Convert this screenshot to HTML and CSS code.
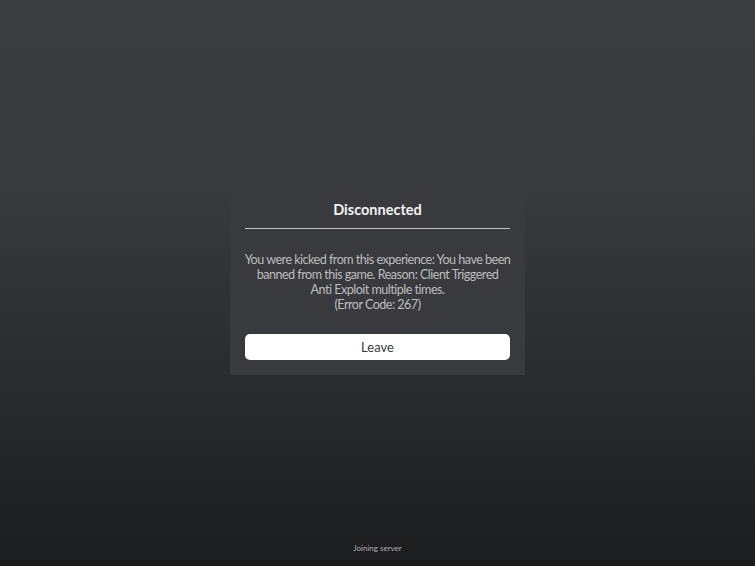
FILE: index.html
```html
<!DOCTYPE html>
<html>
<head>
    <meta http-equiv="Content-Type" content="text/html; charset=utf-8">
    <title>Disconnected</title>
    <link rel="stylesheet" href="styles.css">
</head>
<body>
    <div class="screen">
        <div class="dialog">
            <h1 class="title">Disconnected</h1>
            <div class="divider"></div>
            <p class="message">You were kicked from this experience: You have been<br>banned from this game. Reason: Client Triggered<br>Anti Exploit multiple times.<br>(Error Code: 267)</p>
            <button class="leave">Leave</button>
        </div>
        <div class="status">Joining server</div>
    </div>
</body>
</html>
```

FILE: styles.css
```css
html, body {
    margin: 0;
    padding: 0;
    height: 100%;
}
body {
    font-family: "Lato", "Open Sans", sans-serif;
    background: linear-gradient(to bottom, #3b3c3e 0%, #393a3d 33%, #1c1d1f 100%);
    color: #bdbdbd;
}
.screen {
    height: 566px;
    display: flex;
    flex-direction: column;
    align-items: center;
}
.dialog {
    box-sizing: border-box;
    margin-top: 191px;
    width: 295px;
    height: 184px;
    padding: 0 15px 15px;
    background-color: #393a3d;
    display: flex;
    flex-direction: column;
}
.title {
    margin: 9px 0 0;
    height: 20px;
    line-height: 20px;
    font-size: 14.5px;
    font-weight: bold;
    text-align: center;
    color: #f2f2f2;
}
.divider {
    margin-top: 8px;
    height: 1px;
    background-color: #c4c4c4;
}
.message {
    margin: 23px -10px 0;
    font-size: 12.6px;
    letter-spacing: -0.52px;
    line-height: 15px;
    white-space: nowrap;
    text-align: center;
    color: #bdbdbd;
}
.leave {
    margin-top: auto;
    height: 26px;
    border: none;
    border-radius: 5px;
    background-color: #ffffff;
    color: #393b3d;
    font-family: "Lato", "Open Sans", sans-serif;
    font-size: 13px;
}
.status {
    margin-top: auto;
    margin-bottom: 13px;
    font-size: 8px;
    color: #b0b0b0;
}
```
